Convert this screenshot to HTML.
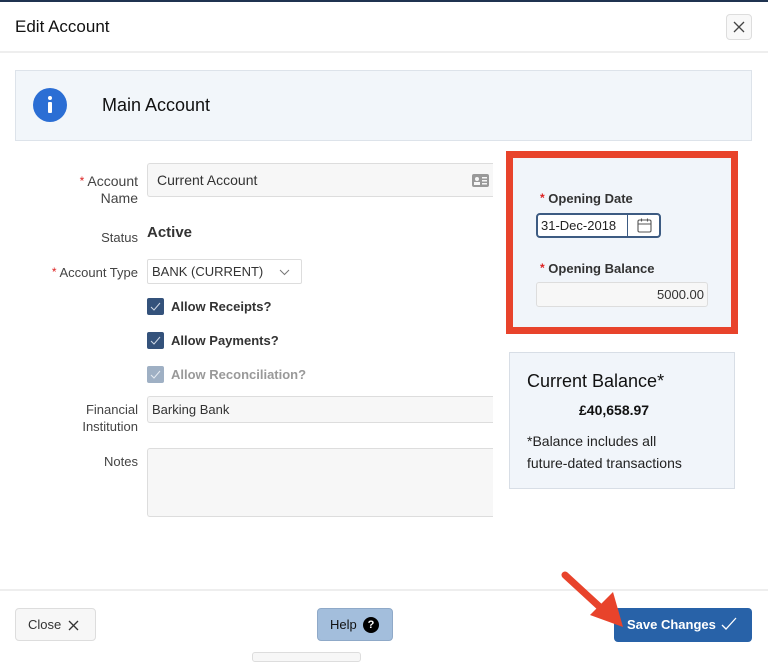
<!DOCTYPE html>
<html><head><style>
*{box-sizing:border-box;margin:0;padding:0}
body{width:768px;height:658px;position:relative;overflow:hidden;background:#fff;font-family:"Liberation Sans",sans-serif;color:#222}
.a{position:absolute}
.lbl{position:absolute;right:630px;text-align:right;font-size:13px;color:#444;line-height:17px}
.req{color:#d22;font-size:12px;vertical-align:top}
.inp{position:absolute;background:#f7f7f7;border:1px solid #ddd;border-radius:3px;font-size:14px;color:#333}
.cut{border-right:none;border-radius:3px 0 0 3px}
.cb{position:absolute;left:147px;width:17px;height:17px;background:#34527b;border-radius:2px}
.cb svg{position:absolute;left:3px;top:3px}
.cbt{position:absolute;left:171px;font-size:13px;font-weight:bold;color:#333}
</style></head><body>
<div class="a" style="left:0;top:0;width:768px;height:2px;background:#1f3350"></div>
<div class="a" style="left:15px;top:17px;font-size:17px;color:#111">Edit Account</div>
<div class="a" style="left:726px;top:14px;width:26px;height:26px;border:1px solid #ddd;border-radius:4px;background:#f8f8f8"><svg width="24" height="24" viewBox="0 0 24 24"><path d="M7 7L17 17M17 7L7 17" stroke="#444" stroke-width="1.3"/></svg></div>
<div class="a" style="left:0;top:51px;width:768px;height:2px;background:#eee"></div>

<div class="a" style="left:15px;top:70px;width:737px;height:71px;background:#f2f6fa;border:1px solid #dde3ea"></div>
<div class="a" style="left:33px;top:88px;width:34px;height:34px;border-radius:50%;background:#2b6ed4"></div>
<div class="a" style="left:48px;top:96px;width:4px;height:4px;border-radius:50%;background:#fff"></div>
<div class="a" style="left:48px;top:102px;width:4px;height:11px;border-radius:1px;background:#fff"></div>
<div class="a" style="left:102px;top:95px;font-size:18px;color:#111">Main Account</div>

<div class="lbl" style="top:173px;font-size:14px"><span class="req">*</span> Account<br>Name</div>
<div class="inp cut" style="left:147px;top:163px;width:346px;height:34px;padding:8px 9px">Current Account
<svg class="a" style="left:324px;top:10px" width="17" height="13" viewBox="0 0 17 13"><rect width="17" height="13" rx="2" fill="#999"/><circle cx="5" cy="5" r="2" fill="#f7f7f7"/><rect x="2" y="8" width="6" height="3" fill="#f7f7f7"/><rect x="10" y="3" width="5" height="1.5" fill="#f7f7f7"/><rect x="10" y="6" width="5" height="1.5" fill="#f7f7f7"/><rect x="10" y="9" width="5" height="1.5" fill="#f7f7f7"/></svg></div>
<div class="lbl" style="top:229px">Status</div>
<div class="a" style="left:147px;top:224px;font-size:15px;font-weight:bold;color:#333">Active</div>
<div class="lbl" style="top:264px"><span class="req">*</span> Account Type</div>
<div class="a" style="left:147px;top:259px;width:155px;height:25px;border:1px solid #ddd;border-radius:2px;background:#fff;font-size:13px;padding:4px 4px;color:#333">BANK (CURRENT)
<svg class="a" style="left:131px;top:9px" width="11" height="7" viewBox="0 0 11 7"><path d="M1 1L5.5 5.5L10 1" stroke="#777" fill="none"/></svg></div>

<div class="cb" style="top:298px"><svg width="11" height="11"><path d="M1 6L4 9L10 2" stroke="#cfd8e6" fill="none" stroke-width="1"/></svg></div>
<div class="cbt" style="top:299px">Allow Receipts?</div>
<div class="cb" style="top:332px"><svg width="11" height="11"><path d="M1 6L4 9L10 2" stroke="#cfd8e6" fill="none" stroke-width="1"/></svg></div>
<div class="cbt" style="top:333px">Allow Payments?</div>
<div class="cb" style="top:366px;background:#9fb0c4"><svg width="11" height="11"><path d="M1 6L4 9L10 2" stroke="#e6ebf2" fill="none" stroke-width="1"/></svg></div>
<div class="cbt" style="top:367px;color:#999">Allow Reconciliation?</div>

<div class="lbl" style="top:401px">Financial<br>Institution</div>
<div class="inp cut" style="left:147px;top:396px;width:346px;height:27px;padding:5px 4px;font-size:13px">Barking Bank</div>
<div class="lbl" style="top:453px">Notes</div>
<div class="inp cut" style="left:147px;top:448px;width:346px;height:69px"></div>

<div class="a" style="left:506px;top:151px;width:232px;height:183px;border:7px solid #e8432b;background:#f1f5fa"></div>
<div class="a" style="left:540px;top:191px;font-size:13px;font-weight:bold;color:#333"><span class="req">*</span> Opening Date</div>
<div class="a" style="left:536px;top:213px;width:125px;height:25px;border:2px solid #3d5b82;border-radius:4px;background:#fff;font-size:13px;padding:3px 3px;color:#222">31-Dec-2018
<div class="a" style="left:89px;top:0;width:1px;height:21px;background:#3d5b82"></div>
<svg class="a" style="left:99px;top:3px" width="15" height="15" viewBox="0 0 15 15"><rect x="1" y="2" width="13" height="12" rx="1.5" fill="none" stroke="#555" stroke-width="1.1"/><path d="M1 6H14M4.5 0.5V3.5M10.5 0.5V3.5" stroke="#555" stroke-width="1.1"/></svg></div>
<div class="a" style="left:540px;top:261px;font-size:13px;font-weight:bold;color:#333"><span class="req">*</span> Opening Balance</div>
<div class="inp" style="left:536px;top:282px;width:172px;height:25px;text-align:right;padding:4px 3px;font-size:13px">5000.00</div>

<div class="a" style="left:509px;top:352px;width:226px;height:137px;background:#f1f5fa;border:1px solid #d8dee6"></div>
<div class="a" style="left:527px;top:371px;font-size:18px;color:#111">Current Balance*</div>
<div class="a" style="left:579px;top:402px;font-size:14px;font-weight:bold;color:#111">£40,658.97</div>
<div class="a" style="left:527px;top:430px;font-size:14px;line-height:22px;color:#222">*Balance includes all<br>future-dated transactions</div>

<div class="a" style="left:0;top:589px;width:768px;height:2px;background:#eee"></div>
<div class="a" style="left:15px;top:608px;width:81px;height:33px;border:1px solid #ddd;border-radius:4px;background:#f7f7f7;font-size:13px;padding:8px 12px;color:#333">Close
<svg class="a" style="left:52px;top:11px" width="11" height="11"><path d="M1 1L10 10M10 1L1 10" stroke="#333" stroke-width="1.3"/></svg></div>
<div class="a" style="left:317px;top:608px;width:76px;height:33px;border:1px solid #8fa9c8;border-radius:4px;background:#a3bedc;font-size:13px;padding:8px 12px;color:#111">Help
<div class="a" style="left:45px;top:8px;width:16px;height:16px;border-radius:50%;background:#000;color:#fff;font-size:11px;font-weight:bold;text-align:center;line-height:16px">?</div></div>
<div class="a" style="left:614px;top:608px;width:138px;height:34px;border-radius:4px;background:#2862a8;font-size:13px;font-weight:bold;padding:9px 13px;color:#fff">Save Changes
<svg class="a" style="left:107px;top:9px" width="16" height="14"><path d="M1 8L5 12L15 1" stroke="#fff" fill="none" stroke-width="1.3"/></svg></div>
<div class="a" style="left:252px;top:652px;width:109px;height:10px;border:1px solid #ddd;border-radius:3px;background:#f7f7f7"></div>

<svg class="a" style="left:555px;top:565px" width="80" height="75" viewBox="0 0 80 75"><path d="M10 10L47 44" stroke="#e8432b" stroke-width="7" stroke-linecap="round"/><path d="M35 50L68 62L58 27Z" fill="#e8432b"/></svg>
</body></html>
